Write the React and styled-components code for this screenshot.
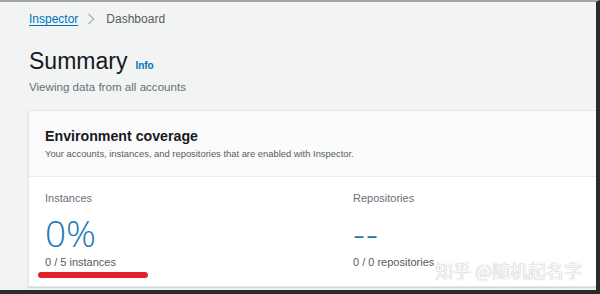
import React from 'react';
import styled, { createGlobalStyle } from 'styled-components';

const GlobalStyle = createGlobalStyle`
  html, body {
    margin: 0;
    padding: 0;
    background: #f2f3f3;
  }
  * {
    box-sizing: border-box;
  }
`;

const Frame = styled.div`
  position: relative;
  width: 600px;
  height: 294px;
  overflow: hidden;
  padding: 9px 0 0 28px;
  background: #f2f3f3;
  border-top: 2px solid #a3a3a3;
  border-right: 4px solid #2b2b2b;
  border-bottom: 4px solid #2b2b2b;
  font-family: "Liberation Sans", Arial, sans-serif;
  color: #16191f;
`;

const Breadcrumbs = styled.nav`
  display: flex;
  align-items: center;
  gap: 9px;
  height: 16px;
  padding-left: 1px;
  font-size: 12px;
  line-height: 16px;
`;

const CrumbLink = styled.a`
  color: #0073bb;
  text-decoration: underline;
  text-underline-offset: 2px;
`;

const CrumbCurrent = styled.span`
  color: #545b64;
  margin-left: 2px;
`;

const Heading = styled.div`
  display: flex;
  align-items: baseline;
  gap: 8px;
  margin-top: 20px;
  padding-left: 1px;
`;

const Title = styled.h1`
  margin: 0;
  font-size: 23px;
  line-height: 28px;
  font-weight: 400;
  color: #16191f;
`;

const InfoLink = styled.span`
  font-size: 10px;
  font-weight: 700;
  color: #0073bb;
`;

const Subtitle = styled.p`
  margin: 4px 0 0;
  padding-left: 1px;
  font-size: 11.6px;
  line-height: 16px;
  color: #687078;
`;

const Card = styled.section`
  margin-top: 15px;
  background: #ffffff;
  border: 1px solid #e3e5e5;
  border-right: none;
  box-shadow: 0 1px 1px rgba(0, 28, 36, 0.12);
`;

const CardHeader = styled.header`
  padding: 15px 16px 15px;
  background: #fbfbfb;
  border-bottom: 1px solid #eaeded;
`;

const CardTitle = styled.h2`
  margin: 0;
  font-size: 14.2px;
  line-height: 20px;
  font-weight: 700;
  color: #16191f;
`;

const CardDescription = styled.p`
  margin: 1px 0 0;
  font-size: 9.4px;
  line-height: 14px;
  color: #545b64;
`;

const CardBody = styled.div`
  display: grid;
  grid-template-columns: 308px 1fr;
  padding: 13px 16px 16px;
`;

const Stat = styled.div`
  position: relative;
  display: flex;
  flex-direction: column;
`;

const StatLabel = styled.div`
  font-size: 11px;
  line-height: 16px;
  color: #687078;
`;

const StatValue = styled.div`
  margin-top: 7px;
  font-family: "Open Sans", "Liberation Sans", sans-serif;
  font-weight: 300;
  font-size: 37px;
  line-height: 40px;
  letter-spacing: ${(p) => (p.$dashes ? '1px' : '0')};
  color: #2277b6;
`;

const StatDetail = styled.div`
  margin-top: 1px;
  font-size: 11px;
  line-height: 16px;
  color: #545b64;
`;

const Highlight = styled.div`
  position: absolute;
  left: -7px;
  top: 82px;
  width: 110px;
  height: 6px;
  border-radius: 3px;
  background: #e3202b;
`;

const Watermark = styled.div`
  position: absolute;
  left: 435px;
  top: 256px;
  font-family: "Noto Sans CJK SC", sans-serif;
  font-size: 18px;
  line-height: 24px;
  color: #fafafa;
  text-shadow: 0 0 1px rgba(0, 0, 0, 0.4);
  white-space: nowrap;
`;

const Chevron = () => (
  <svg width="8" height="12" viewBox="0 0 8 12" fill="none">
    <path d="M1.5 1l5 5-5 5" stroke="#aab7b8" strokeWidth="1.3" />
  </svg>
);

const stats = [
  { label: 'Instances', value: '0%', detail: '0 / 5 instances', marked: true },
  { label: 'Repositories', value: '--', detail: '0 / 0 repositories', dashes: true },
];

const App = () => (
  <>
    <GlobalStyle />
    <Frame>
      <Breadcrumbs>
        <CrumbLink>Inspector</CrumbLink>
        <Chevron />
        <CrumbCurrent>Dashboard</CrumbCurrent>
      </Breadcrumbs>
      <Heading>
        <Title>Summary</Title>
        <InfoLink>Info</InfoLink>
      </Heading>
      <Subtitle>Viewing data from all accounts</Subtitle>
      <Card>
        <CardHeader>
          <CardTitle>Environment coverage</CardTitle>
          <CardDescription>
            Your accounts, instances, and repositories that are enabled with Inspector.
          </CardDescription>
        </CardHeader>
        <CardBody>
          {stats.map((s) => (
            <Stat key={s.label}>
              <StatLabel>{s.label}</StatLabel>
              <StatValue $dashes={s.dashes}>{s.value}</StatValue>
              <StatDetail>{s.detail}</StatDetail>
              {s.marked && <Highlight />}
            </Stat>
          ))}
        </CardBody>
      </Card>
      <Watermark>知乎 @随机起名字</Watermark>
    </Frame>
  </>
);

export default App;
